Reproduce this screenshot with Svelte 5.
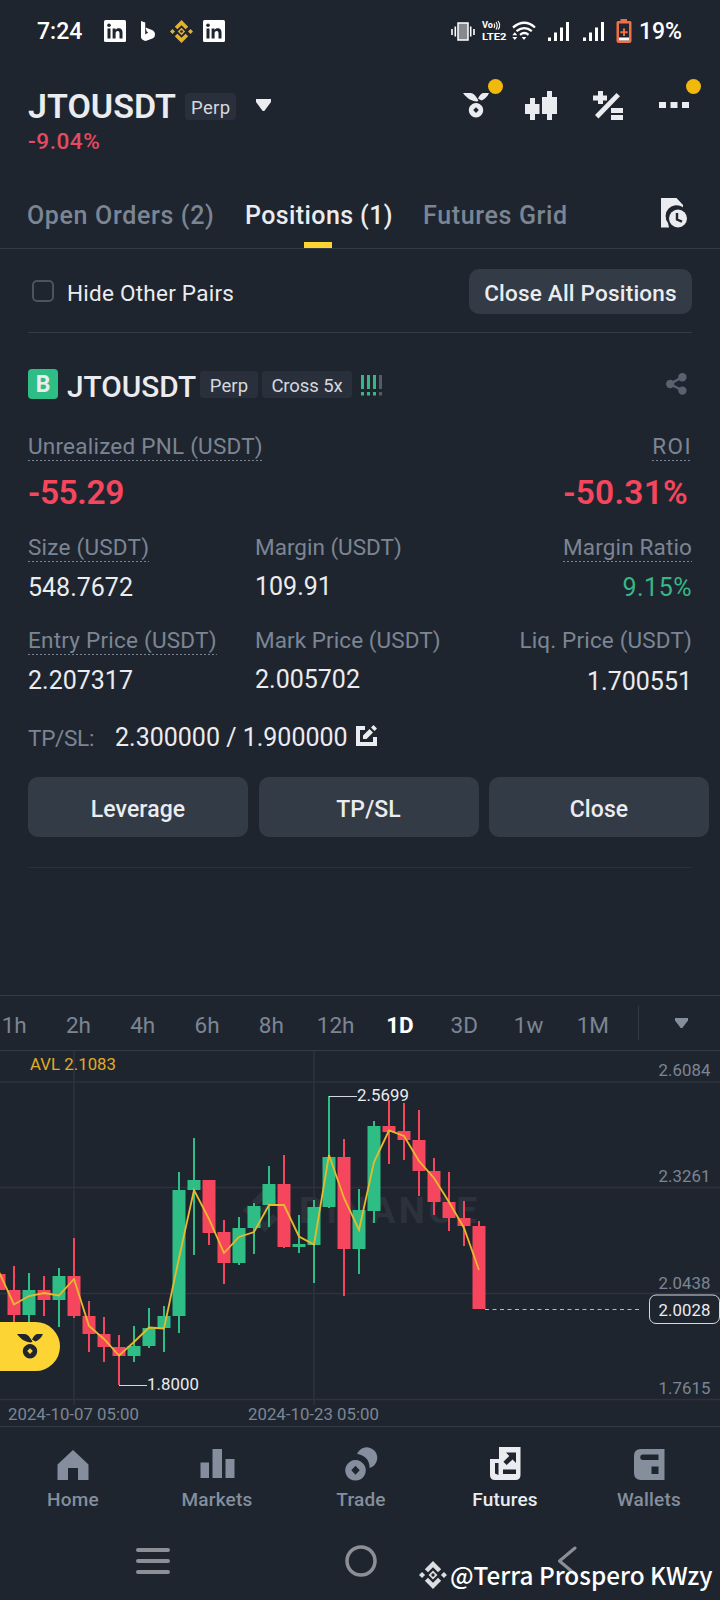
<script>
  const tabs = [
    { label: "Open Orders (2)", cls: "orders" },
    { label: "Positions (1)", cls: "positions" },
    { label: "Futures Grid", cls: "grid" },
  ];
  let activeTab = "positions";
  let hideOthers = false;

  const intervals = ["1h", "2h", "4h", "6h", "8h", "12h", "1D", "3D", "1w", "1M"];
  let interval = "1D";

  const navItems = ["Home", "Markets", "Trade", "Futures", "Wallets"];
  let activeNav = "Futures";

  // [x, high, body top, body bottom, low, up?]
  const candles = [
    [-1, 1266, 1274, 1290, 1292, 0],
    [14, 1266, 1290, 1315, 1325, 0],
    [29, 1273, 1290, 1315, 1325, 1],
    [44, 1276, 1290, 1300, 1316, 0],
    [59, 1268, 1276, 1300, 1327, 1],
    [74, 1238, 1276, 1316, 1318, 0],
    [89, 1301, 1316, 1334, 1352, 0],
    [104, 1317, 1334, 1347, 1362, 0],
    [119, 1335, 1347, 1356, 1385, 0],
    [134, 1326, 1346, 1356, 1362, 1],
    [149, 1308, 1328, 1346, 1348, 1],
    [164, 1306, 1316, 1328, 1352, 1],
    [179, 1172, 1190, 1316, 1333, 1],
    [194, 1138, 1180, 1190, 1255, 1],
    [209, 1180, 1180, 1233, 1245, 0],
    [224, 1220, 1232, 1263, 1284, 0],
    [239, 1217, 1228, 1263, 1265, 1],
    [254, 1203, 1206, 1228, 1254, 1],
    [269, 1166, 1184, 1205, 1227, 1],
    [284, 1155, 1184, 1247, 1248, 0],
    [299, 1215, 1244, 1247, 1253, 1],
    [314, 1200, 1207, 1245, 1283, 1],
    [329, 1096, 1157, 1207, 1208, 1],
    [344, 1139, 1157, 1249, 1296, 0],
    [359, 1189, 1210, 1249, 1274, 1],
    [374, 1121, 1126, 1211, 1223, 1],
    [389, 1100, 1126, 1132, 1164, 0],
    [404, 1103, 1131, 1140, 1160, 0],
    [419, 1110, 1140, 1171, 1196, 0],
    [434, 1158, 1171, 1202, 1215, 0],
    [449, 1172, 1202, 1218, 1231, 0],
    [464, 1201, 1218, 1226, 1246, 0],
    [479, 1221, 1226, 1309, 1309, 0],
  ];

  const avl = [
    1272, 1304.5, 1296, 1293, 1295.5, 1279, 1326, 1339, 1355.5, 1342, 1327.5, 1328.5, 1258, 1190,
    1219, 1253, 1237, 1232, 1205, 1205, 1236.5, 1244.5, 1155, 1198, 1230, 1162, 1130.5, 1136,
    1161, 1178, 1202, 1228, 1270,
  ];
  $: avlPoints = avl.map((y, i) => `${-1 + i * 15},${y}`).join(" ");

  const gridY = [1082, 1187.5, 1293.5, 1399.5];
  const prices = [["2.6084", 1076], ["2.3261", 1182], ["2.0438", 1288.5], ["1.7615", 1394]];
  const dates = [["2024-10-07 05:00", 8, 74], ["2024-10-23 05:00", 248, 314]];
</script>

{#snippet linkedin()}
  <svg width="22" height="22" viewBox="0 0 22 22">
    <rect width="22" height="22" rx="1.500" fill="#fff" />
    <path d="M3.500 8.500h3v10h-3zM8.600 8.500h2.900v1.400c.6-1 1.700-1.650 3.100-1.650 3 0 3.900 1.900 3.900 4.700v5.550h-3v-5c0-1.600-.4-2.600-1.800-2.600s-2.100 1-2.100 2.600v5h-3z" fill="#1f252f" />
    <circle cx="5" cy="5.200" r="1.800" fill="#1f252f" />
  </svg>
{/snippet}

{#snippet diamond(size, color)}
  <svg width={size} height={size} viewBox="0 0 24 24" fill={color}>
    <path d="M12 0l7 7-2.700 2.700L12 5.400 7.700 9.700 5 7zM12 24l-7-7 2.700-2.700 4.300 4.300 4.300-4.300L19 17zM12 8.200l3.800 3.800-3.800 3.800L8.200 12zM2.600 9.400L5.200 12l-2.600 2.600L0 12zM21.400 9.400L24 12l-2.600 2.600-2.600-2.600z" />
    <circle class="hole" cx="12" cy="12" r="1.400" />
  </svg>
{/snippet}

{#snippet medal()}
  <svg width="26" height="25" viewBox="0 0 26 25">
    <path d="M0 0h7.500c3 0 5.500 3 8 7.500l-1.500 1C8.500 8 4 5.500 0 0zM15 5.500C16.500 2 18.500 0 21 0h5c-1.500 3.500-4 6-7.500 7.500z" fill="currentColor" />
    <path d="M13 10a7.200 7.200 0 1 0 .01 0zM13 14.300l2.800 2.800-2.800 2.800-2.800-2.800z" fill="currentColor" fill-rule="evenodd" />
  </svg>
{/snippet}

{#snippet signal()}
  <svg width="21" height="19" viewBox="0 0 21 19" fill="#fff">
    <path d="M0 15.500h3V19H0zM6 10.500h3V19H6zM12 5.500h3V19h-3zM18 0h3v19h-3z" />
  </svg>
{/snippet}

<div class="phone">
  <div class="status">
    <span class="time">7:24</span>
    <div class="apps">
      {@render linkedin()}
      <svg width="14" height="20" viewBox="0 0 14 20">
        <path d="M0 0l4.200 1.500v12l3-1.900-1.500-1.200L4.500 6.500 11 9q3 1.500 3 4.500 0 2.500-2 3.700L6 19.600q-1.500.7-3 0L1 18.300Q0 17.600 0 16z" fill="#fff" />
      </svg>
      {@render diamond(23, "#e8b024")}
      {@render linkedin()}
    </div>
    <div class="radios">
      <svg width="24" height="19" viewBox="0 0 24 19">
        <rect x="7" y="1" width="10" height="17" fill="#85898f" stroke="#fff" stroke-width="1.500" />
        <path d="M1 7v6M4.300 4.500v10M19.700 4.500v10M23 7v6" stroke="#fff" stroke-width="1.600" />
      </svg>
      <svg class="volte" width="25" height="22" viewBox="0 0 25 22" fill="#fff">
        <text x="0" y="7.300" font-size="8.800" textLength="11" lengthAdjust="spacingAndGlyphs">Vo</text>
        <path d="M12 2.500q1.500 2 0 4.500M14 1q2.500 3.500 0 7.500M16 0q3.500 4.500 0 8.500" fill="none" stroke="#fff" stroke-width="1.100" />
        <text x="0" y="18.800" font-size="9.500" textLength="24.500" lengthAdjust="spacingAndGlyphs">LTE2</text>
      </svg>
      <svg class="wifi" width="24" height="20" viewBox="0 0 24 20">
        <path d="M1 6.500Q12.500-3 23 6.500M4.500 10.200Q12.500 4 19.800 10.200M8 13.800q4.500-3.500 8.500 0" fill="none" stroke="#fff" stroke-width="2.300" />
        <path d="M9.700 16h4.600L12 19zM.3 14.300L2.800 11.300l2.500 3zM.3 16h5l-2.500 3z" fill="#fff" />
      </svg>
      <span class="sim">{@render signal()}</span>
      <span class="sim">{@render signal()}</span>
      <svg class="battery" width="16" height="24" viewBox="0 0 16 24">
        <path d="M4.500 0h6.500v2H14q1.500 0 1.500 1.500V22q0 2-2 2H2.500q-2 0-2-2V3.500Q.5 2 2 2h2.500z" fill="#ee7048" />
        <rect x="3" y="4.500" width="10" height="17" fill="#1f252f" />
        <rect x="3" y="18.500" width="10" height="3" fill="#fff" />
        <path d="M8 9.500v7.500M4.300 13.200h7.400" stroke="#ee7048" stroke-width="2" />
      </svg>
      <span class="pct">19%</span>
    </div>
  </div>

  <header>
    <div class="pair">
      <div class="name">
        <h1>JTOUSDT</h1>
        <span class="chip">Perp</span>
        <svg class="arrow" width="15" height="12" viewBox="0 0 15 12"><path d="M0 0h15v3L8.300 12H6.700L0 3z" fill="#eaecef" /></svg>
      </div>
      <div class="change">-9.04%</div>
    </div>
    <div class="tools">
      <button class="tool dot">{@render medal()}</button>
      <button class="tool">
        <svg width="32" height="29" viewBox="0 0 32 29" fill="#eaecef"><path d="M5 7h5v6h4.500v10H10v6H5v-6H0V13h5zM22 0h5v6h5v17h-5v6h-5v-6h-5V6h5z" /></svg>
      </button>
      <button class="tool">
        <svg width="30" height="29" viewBox="0 0 30 29" fill="#eaecef"><path d="M5 0h5v4.500h4v5h-4V13H5V9.500H0v-5h5zM23.500 2l3.500 3.300L5.500 27.500 2 24zM18 17h12v5H18zM18 24h12v5H18z" /></svg>
      </button>
      <button class="tool dot more">
        <svg width="30" height="6" viewBox="0 0 30 6" fill="#eaecef"><path d="M0 0h7v6H0zM11.500 0h7v6h-7zM23 0h7v6h-7z" /></svg>
      </button>
    </div>
  </header>

  <nav class="tabs">
    {#each tabs as tab}
      <button class="tab {tab.cls}" class:active={activeTab === tab.cls} on:click={() => (activeTab = tab.cls)}>{tab.label}</button>
    {/each}
    <svg class="history" width="27" height="30" viewBox="0 0 27 30">
      <path d="M0 0h15.500L22 7v2.200A11 11 0 0 0 7 25l1 4.500H0z" fill="#eaecef" />
      <circle cx="17" cy="20.500" r="9" fill="#eaecef" />
      <path d="M16 15v6.500l5 2.200" fill="none" stroke="#1f252f" stroke-width="2.400" />
    </svg>
  </nav>

  <main>
    <div class="filter">
      <label class="hide">
        <input type="checkbox" bind:checked={hideOthers} />
        <span>Hide Other Pairs</span>
      </label>
      <button class="close-all">Close All Positions</button>
    </div>

    <section class="position">
      <div class="pos-head">
        <span class="side">B</span>
        <h2>JTOUSDT</h2>
        <span class="chip wide">Perp</span>
        <span class="chip wide cross">Cross 5x</span>
        <svg class="risk" width="22" height="21" viewBox="0 0 22 21">
          <path d="M1.500 0v14M7.500 0v14M13.500 0v14M1.500 17v3.500M7.500 17v3.500M13.500 17v3.500" stroke="#37b686" stroke-width="3" />
          <path d="M19.500 0v14M19.500 17v3.500" stroke="#555b65" stroke-width="3" />
        </svg>
        <svg class="share" width="21" height="22" viewBox="0 0 21 22" fill="#5a6170">
          <path d="M16.500 4L4 11l12.500 6.500" fill="none" stroke="#5a6170" stroke-width="2.500" />
          <circle cx="4.200" cy="11" r="4.200" /><circle cx="16.400" cy="4.200" r="4.200" /><circle cx="16.400" cy="17.600" r="4.200" />
        </svg>
      </div>

      <div class="row pnl">
        <div class="cell"><span class="label dotted l-pnl">Unrealized PNL (USDT)</span><b class="big">-55.29</b></div>
        <div class="cell right"><span class="label dotted l-roi">ROI</span><b class="big roi">-50.31%</b></div>
      </div>
      <div class="row three">
        <div class="cell"><span class="label dotted l-size">Size (USDT)</span><span class="value">548.7672</span></div>
        <div class="cell mid"><span class="label">Margin (USDT)</span><span class="value">109.91</span></div>
        <div class="cell right"><span class="label dotted l-ratio">Margin Ratio</span><span class="value green">9.15%</span></div>
      </div>
      <div class="row three">
        <div class="cell"><span class="label dotted l-entry">Entry Price (USDT)</span><span class="value">2.207317</span></div>
        <div class="cell mid"><span class="label l-mark">Mark Price (USDT)</span><span class="value">2.005702</span></div>
        <div class="cell right"><span class="label l-liq">Liq. Price (USDT)</span><span class="value liq">1.700551</span></div>
      </div>
      <div class="tpsl">
        <span class="label">TP/SL:</span>
        <span class="value">2.300000 / 1.900000</span>
        <svg width="21" height="21" viewBox="0 0 21 21" fill="#eaecef">
          <path d="M0 1h9v4H4v12h13v-5h4v9H0zM7 14V10.500L13.500 4l3.500 3.500-6.500 6.500zM15 2.500L17.500 0 21 3.500 18.500 6z" />
        </svg>
      </div>
      <div class="actions">
        <button>Leverage</button>
        <button>TP/SL</button>
        <button>Close</button>
      </div>
    </section>
  </main>

  <div class="intervals">
    <div class="list">
      {#each intervals as item}
        <button class:active={interval === item} on:click={() => (interval = item)}>{item}</button>
      {/each}
    </div>
    <svg class="more-int" width="13" height="10" viewBox="0 0 13 10"><path d="M0 0h13v2.500L7.300 10H5.700L0 2.500z" fill="#848e9c" /></svg>
  </div>

  <div class="chart">
    <svg width="720" height="375" viewBox="0 1051 720 375">
      {#each gridY as y}
        <line x1="0" x2="720" y1={y} y2={y} stroke="#2d333d" stroke-width="1.500" />
      {/each}
      {#each dates as [text, x, gx]}
        <line x1={gx} x2={gx} y1="1051" y2="1405" stroke="#2d333d" stroke-width="1.500" />
        <text {x} y="1420" class="axis" textLength="131">{text}</text>
      {/each}

      <g fill="#2c323b">
        <path d="M265 1188l13 13-5 5-8-8-8 8-5-5zM265 1232l-13-13 5-5 8 8 8-8 5 5zM265 1204l6 6-6 6-6-6zM248 1205l5 5-5 5-5-5zM282 1205l5 5-5 5-5-5z" />
        <text x="299" y="1223" class="brand" textLength="178">BINANCE</text>
      </g>

      {#each candles as [x, high, top, bottom, low, up]}
        <g fill={up ? "#2ebd85" : "#f6465d"}>
          <rect x={x - 1} y={high} width="2" height={low - high} />
          <rect x={x - 6.500} y={top} width="13" height={bottom - top} />
        </g>
      {/each}
      <polyline points={avlPoints} fill="none" stroke="#e9b92c" stroke-width="1.800" />

      <path d="M329 1096.500h28M119 1385.500h28" stroke="#d5d9df" stroke-width="1" />
      <text x="357" y="1101" class="mark" textLength="52">2.5699</text>
      <text x="147" y="1390" class="mark" textLength="52">1.8000</text>
      <text x="30" y="1070" class="axis avl" textLength="86">AVL 2.1083</text>

      {#each prices as [text, y]}
        <text x="658.500" {y} class="axis" textLength="52">{text}</text>
      {/each}
      <path d="M485 1309.500H640" stroke="#b4bac3" stroke-width="1" stroke-dasharray="4 3.500" />
      <rect x="649.500" y="1295" width="70" height="28.500" rx="6.500" fill="#1f252f" stroke="#d5d9df" stroke-width="1" />
      <text x="658.500" y="1316" class="mark" textLength="52">2.0028</text>
    </svg>
    <button class="campaign">{@render medal()}</button>
  </div>

  <nav class="bottom">
    {#each navItems as item}
      <button class:active={activeNav === item} on:click={() => (activeNav = item)}>
        <svg width="36" height="34" viewBox="0 0 36 34" fill="currentColor">
          {#if item === "Home"}
            <path d="M18 3l15.500 14.500V33H23V21h-10v12H2.500V17.500z" />
          {:else if item === "Markets"}
            <path d="M1.500 15.500H10V31H1.500zM13.500 2H23v29h-9.500zM26.500 12h9v19h-9z" />
          {:else if item === "Trade"}
            <path d="M14 7A10.500 10.500 0 1 1 26.500 21C27 13.500 22 8 14 7z" />
            <path d="M12.500 13a10.300 10.300 0 1 0 .01 0zM12.500 18.800l4.200 4.500-4.200 4.500-4.200-4.500z" fill-rule="evenodd" />
          {:else if item === "Futures"}
            <path d="M12 0h21.500v28q0 5-5 5H8q-5 0-5-5V12h9z" />
            <path d="M8 16h3.500v12L8 26.500zM16 22.500h13v4.500H16zM19 5.500h10V16l-3.400-3.400-6 5.400-3.200-3.200 5.900-5.700z" fill="#1f252f" />
          {:else}
            <path d="M10 2H33.500v31H10q-7 0-7-7V9q0-7 7-7z" />
            <path d="M27.500 7.500H12a2.700 2.700 0 0 0 0 5.500H27.500zM20.500 19.500H27.500V27H20.500z" fill="#1f252f" />
          {/if}
        </svg>
        <span>{item}</span>
      </button>
    {/each}
  </nav>

  <div class="system">
    <span><svg width="34" height="26" viewBox="0 0 34 26"><path d="M2 2h30M2 13h30M2 24h30" stroke="#8c9096" stroke-width="4" stroke-linecap="round" /></svg></span>
    <span class="home"><svg width="32" height="32" viewBox="0 0 32 32"><circle cx="16" cy="16" r="14" fill="none" stroke="#8c9096" stroke-width="3.500" /></svg></span>
    <span class="back"><svg width="20" height="30" viewBox="0 0 20 30"><path d="M18 2L2.500 15 18 28" fill="none" stroke="#8c9096" stroke-width="3" stroke-linecap="round" stroke-linejoin="round" /></svg></span>
    <div class="author">{@render diamond(28, "#dcdee1")}<span>@Terra Prospero KWzy</span></div>
  </div>
</div>

<style>
  :global(body) {
    margin: 0;
    background: #1f252f;
  }

  .phone {
    width: 720px;
    height: 1600px;
    overflow: hidden;
    display: flex;
    flex-direction: column;
    background: #1f252f;
    color: #eaecef;
    font-family: Roboto, "Liberation Sans", sans-serif;
  }

  svg {
    display: block;
    flex: none;
  }

  button {
    padding: 0;
    border: none;
    background: none;
    color: inherit;
    font: inherit;
    cursor: pointer;
  }

  .status {
    height: 62px;
    box-sizing: border-box;
    padding: 0 38px 0 37px;
    display: flex;
    align-items: center;
    color: #fff;
    font-size: 23px;
    font-weight: 500;
  }

  .time {
    width: 67px;
  }

  .apps {
    display: flex;
    align-items: center;
    gap: 10px;
  }

  .apps svg:nth-child(2) {
    margin: 0 5px 0 5px;
  }

  .hole {
    fill: #1f252f;
  }

  .radios {
    margin-left: auto;
    display: flex;
    align-items: center;
  }

  .volte {
    margin: 2px 0 0 7px;
    font-weight: 700;
    overflow: visible;
  }

  .wifi {
    margin: 0 12px 0 5px;
  }

  .sim {
    margin-right: 14px;
  }

  .battery {
    margin: 0 7px 0 -2px;
  }

  header {
    height: 110px;
    box-sizing: border-box;
    padding: 24px 28px 0;
    display: flex;
    justify-content: space-between;
  }

  .name {
    height: 40px;
    display: flex;
    align-items: center;
  }

  h1 {
    width: 157px;
    margin: 0;
    font-size: 34px;
    font-weight: 600;
    line-height: 40px;
  }

  .chip {
    height: 27px;
    padding: 0 6px;
    border-radius: 4px;
    background: #29303b;
    font-size: 18.5px;
    line-height: 30px;
    letter-spacing: 0.35px;
    color: #d5d9df;
  }

  .arrow {
    margin: -3px 0 0 20px;
  }

  .change {
    margin-top: 1px;
    font-size: 22.5px;
    font-weight: 500;
    line-height: 28px;
    letter-spacing: 0.6px;
    color: #e54b61;
  }

  .tools {
    display: flex;
    gap: 36px;
    height: 38px;
    align-items: center;
    color: #eaecef;
  }

  .tool {
    position: relative;
  }

  .dot::after {
    content: "";
    position: absolute;
    right: -14px;
    top: -14px;
    width: 15px;
    height: 15px;
    border-radius: 50%;
    background: #f0b90b;
  }

  .more {
    margin-right: 3px;
    height: 28px;
    display: flex;
    align-items: center;
  }

  .more::after {
    right: -12px;
    top: -12px;
  }

  .tabs {
    height: 77px;
    box-sizing: border-box;
    padding: 10px 32px 0 27px;
    display: flex;
    border-bottom: 1px solid #343b45;
    font-size: 25px;
    font-weight: 500;
    color: #7c8593;
  }

  .tab {
    position: relative;
    height: 66px;
    letter-spacing: 0.65px;
    text-align: left;
    white-space: nowrap;
  }

  .orders {
    width: 218px;
  }

  .positions {
    width: 146px;
    margin-right: 32px;
    letter-spacing: 0.4px;
  }

  .tab.active {
    color: #eaecef;
  }

  .tab.active::after {
    content: "";
    position: absolute;
    left: 59px;
    bottom: 0;
    width: 28px;
    height: 6px;
    background: #fcd535;
  }

  .history {
    margin: 16px 0 0 auto;
  }

  main {
    padding: 0 28px;
    height: 746px;
    box-sizing: border-box;
  }

  .filter {
    height: 84px;
    box-sizing: border-box;
    padding-top: 1px;
    display: flex;
    align-items: center;
    justify-content: space-between;
    border-bottom: 1px solid #343b45;
  }

  .hide {
    display: flex;
    align-items: center;
    font-size: 22.5px;
    letter-spacing: 0.25px;
    padding-top: 3px;
  }

  .hide input {
    appearance: none;
    width: 22px;
    height: 22px;
    margin: -3px 13px 0 4px;
    border: 2px solid #4c535f;
    border-radius: 5px;
  }

  .close-all {
    width: 223px;
    height: 45px;
    padding-top: 4px;
    border-radius: 10px;
    background: #333b47;
    font-size: 22.5px;
    font-weight: 500;
    letter-spacing: 0.2px;
  }

  .pos-head {
    display: flex;
    align-items: center;
    height: 40px;
    padding: 33px 5px 0 0;
  }

  .side {
    width: 30px;
    height: 30px;
    margin-top: -4px;
    border-radius: 4px;
    background: #2ebd85;
    font-size: 23px;
    font-weight: 700;
    line-height: 32px;
    text-align: center;
  }

  h2 {
    width: 133px;
    margin: 2px 0 0 9px;
    font-size: 29.8px;
    font-weight: 500;
    line-height: 40px;
  }

  .pos-head .chip {
    margin-right: 4px;
    padding: 0;
    width: 58px;
    text-align: center;
    line-height: 31px;
    margin-top: -3px;
    letter-spacing: 0.1px;
  }

  .pos-head .cross {
    width: 90px;
    letter-spacing: -0.1px;
  }

  .risk {
    margin: -2px 0 0 5px;
  }

  .share {
    margin: -4px 0 0 auto;
  }

  .row {
    display: grid;
    grid-template-columns: 1fr auto;
    margin-top: 23px;
  }

  .row.pnl {
    margin-top: 26px;
    margin-bottom: 24px;
  }

  .row.pnl + .row {
    margin-top: 0;
  }

  .row.three {
    grid-template-columns: 227px 1fr auto;
  }

  .row.three + .row.three {
    margin-top: 22px;
  }

  .cell {
    display: flex;
    flex-direction: column;
    align-items: flex-start;
  }

  .cell.right {
    align-items: flex-end;
  }

  .label {
    font-size: 22.5px;
    line-height: 28px;
    padding-bottom: 1px;
    color: #7c8593;
    white-space: nowrap;
  }

  .l-pnl,
  .l-entry,
  .l-size {
    letter-spacing: 0.23px;
  }

  .l-roi {
    letter-spacing: 1.4px;
  }

  .l-ratio {
    letter-spacing: 0.15px;
  }

  .l-mark {
    letter-spacing: 0.07px;
  }

  .l-liq {
    letter-spacing: 0.16px;
  }

  .dotted {
    background: repeating-linear-gradient(90deg, #7c8593 0 2px, transparent 2px 4px) bottom / 100% 1px no-repeat;
  }

  .value {
    margin-top: 10px;
    font-size: 25px;
    line-height: 32px;
  }

  .mid .value {
    margin-top: 9px;
  }

  .value.liq {
    margin: 11px 0 -1px;
  }

  .value.green {
    color: #37b686;
    letter-spacing: 0.5px;
  }

  .big {
    margin-top: 16px;
    font-size: 33.5px;
    font-weight: 600;
    line-height: 32px;
    letter-spacing: -0.4px;
    color: #f6465d;
  }

  .big.roi {
    margin-right: 4px;
    letter-spacing: 0.25px;
  }

  .tpsl {
    height: 32px;
    margin-top: 25px;
    display: flex;
    align-items: center;
  }

  .tpsl .label {
    width: 87px;
    letter-spacing: -0.3px;
  }

  .tpsl .value {
    margin: 0 8px 0 0;
  }

  .tpsl svg {
    margin-top: -6px;
  }

  .actions {
    display: grid;
    grid-template-columns: repeat(3, 220px);
    gap: 10.5px;
    margin-top: 23px;
    padding-bottom: 30px;
    border-bottom: 1px solid #2b313b;
  }

  .actions button {
    height: 60px;
    padding-top: 5px;
    border-radius: 10px;
    background: #333b47;
    font-size: 23px;
    font-weight: 500;
    letter-spacing: 0.1px;
  }

  .intervals {
    height: 56px;
    box-sizing: border-box;
    border-top: 1px solid #343b45;
    border-bottom: 1px solid #343b45;
    display: flex;
    align-items: center;
  }

  .list {
    width: 657px;
    height: 34px;
    box-sizing: border-box;
    margin-left: -18px;
    display: grid;
    grid-template-columns: repeat(10, 64.3px);
    border-right: 1px solid #343b45;
    font-size: 22.5px;
    color: #7c8593;
    padding-top: 3px;
  }

  .list .active {
    color: #fff;
    font-weight: 700;
  }

  .more-int {
    margin: -1px 0 0 36px;
  }

  .chart {
    position: relative;
    height: 375px;
  }

  .axis {
    font-size: 16.8px;
    fill: #7c8593;
  }

  .avl {
    fill: #e0ac26;
  }

  .mark {
    font-size: 16.8px;
    fill: #eaecef;
  }

  .brand {
    font-size: 37px;
    font-weight: 700;
  }

  .campaign {
    position: absolute;
    left: 0;
    top: 271px;
    width: 60px;
    height: 49px;
    padding-left: 17px;
    border-radius: 0 25px 25px 0;
    background: #fcd535;
    color: #202630;
  }

  .bottom {
    height: 94px;
    border-top: 1px solid #343b45;
    padding-left: 1px;
    display: grid;
    grid-template-columns: repeat(5, 144px);
    color: #848e9c;
  }

  .bottom button {
    display: flex;
    flex-direction: column;
    align-items: center;
    padding-top: 20px;
    font-size: 19px;
    font-weight: 500;
    line-height: 24px;
    letter-spacing: 0.2px;
  }

  .bottom span {
    margin-top: 7px;
  }

  .bottom .active {
    color: #eaecef;
  }

  .system {
    position: relative;
    height: 79px;
    display: grid;
    grid-template-columns: 306px 108px 306px;
    align-items: center;
    justify-items: center;
  }

  .system .home {
    margin-left: 1px;
  }

  /* author tag lies over the system buttons */
  .author {
    position: absolute;
    left: 419px;
    top: 37px;
    display: flex;
    align-items: center;
    gap: 3px;
    font-family: "Noto Sans CJK SC", sans-serif;
    font-size: 24.3px;
    font-weight: 500;
    line-height: 34px;
    color: #fff;
    white-space: nowrap;
  }
</style>
